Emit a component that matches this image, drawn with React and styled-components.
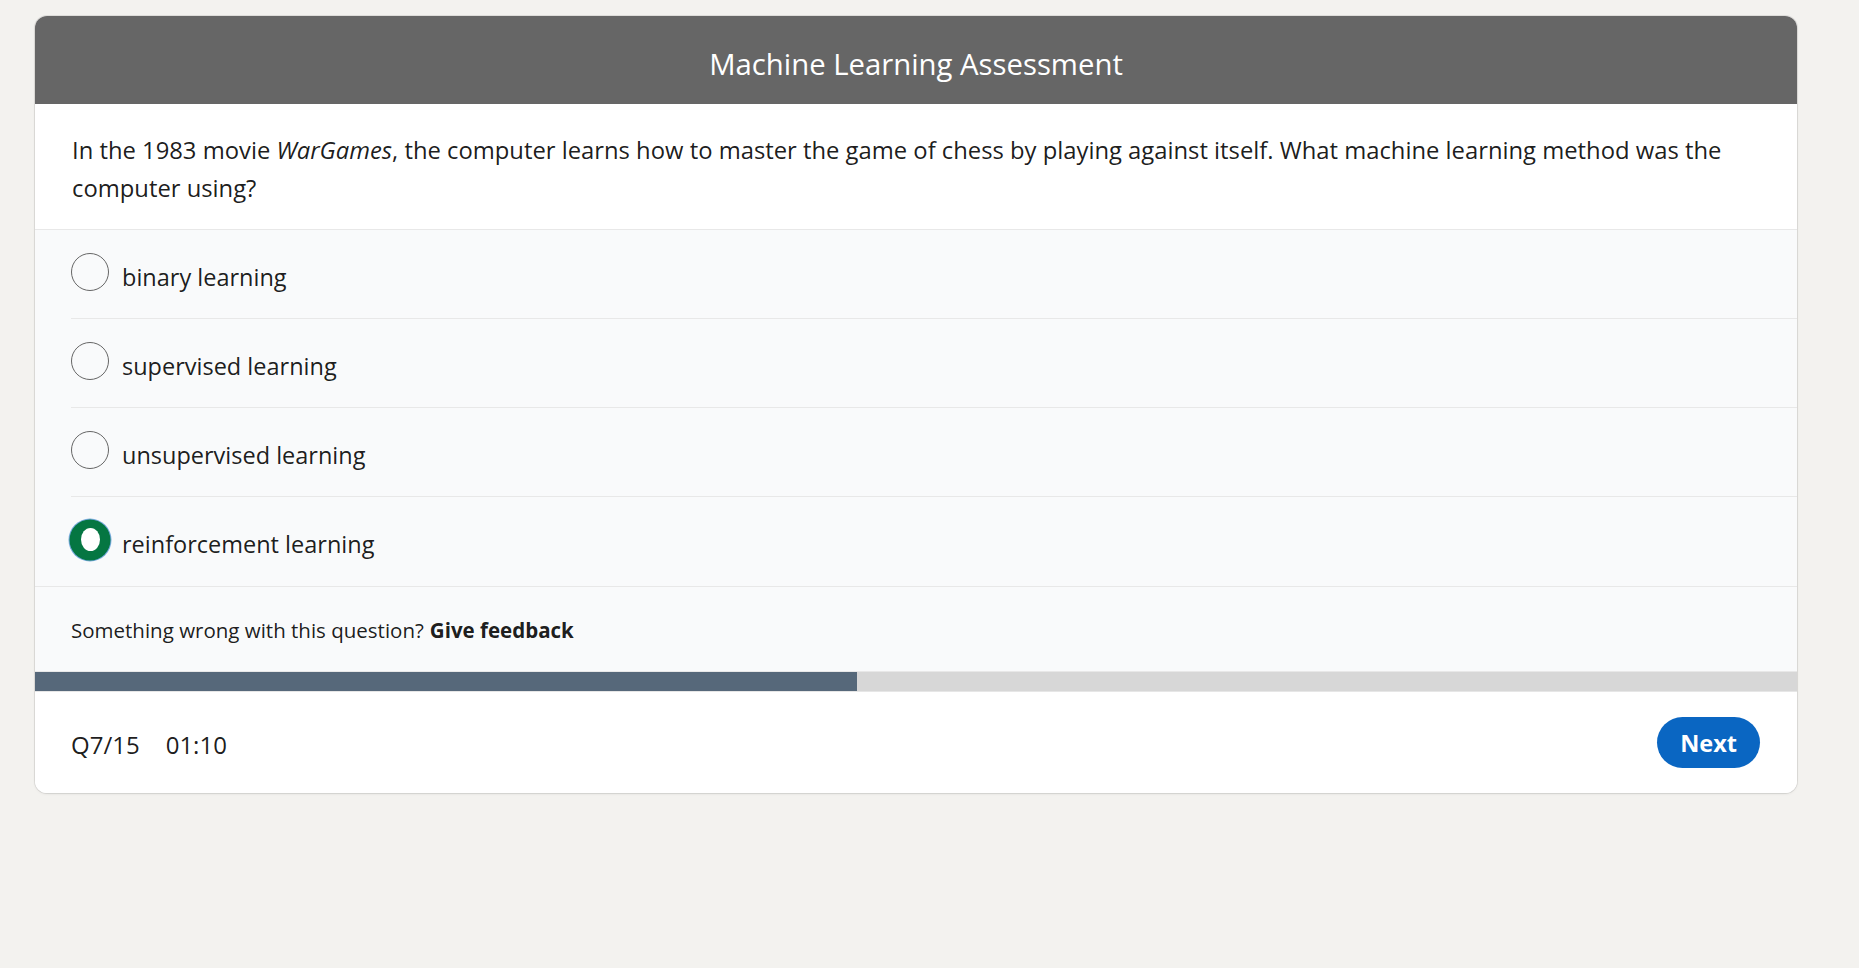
import React from "react";
import styled, { createGlobalStyle, css } from "styled-components";

const GlobalStyle = createGlobalStyle`
  html, body {
    margin: 0;
    padding: 0;
    background: #f3f2ef;
  }
  body {
    font-family: "Open Sans", "Noto Sans", "Liberation Sans", sans-serif;
    color: rgba(0, 0, 0, 0.9);
    -webkit-font-smoothing: antialiased;
  }
  * { box-sizing: border-box; }
`;

const Page = styled.div`
  min-height: 968px;
  padding: 16px 0 0 35px;
`;

const Card = styled.section`
  width: 1762px;
  background: #ffffff;
  border-radius: 12px;
  overflow: hidden;
  box-shadow: 0 0 0 1px rgba(0, 0, 0, 0.08), 0 1px 3px rgba(0, 0, 0, 0.08);
  display: flex;
  flex-direction: column;
`;

const Header = styled.header`
  height: 88px;
  padding-top: 8px;
  background: #666666;
  color: #ffffff;
  display: flex;
  align-items: center;
  justify-content: center;
  font-size: 29.3px;
  font-weight: 400;
`;

const Question = styled.div`
  padding: 27px 37px 22px;
  font-size: 23.8px;
  line-height: 38px;
  border-bottom: 1px solid #e8e8e8;
  background: #ffffff;

  em { font-style: italic; }
`;

const OptionList = styled.div`
  background: #f9fafb;
  border-bottom: 1px solid #e8e8e8;
  display: flex;
  flex-direction: column;
`;

const OptionRow = styled.label`
  margin-left: 36px;
  height: 89px;
  display: flex;
  align-items: center;
  gap: 13px;
  font-size: 23.5px;
  cursor: pointer;
  ${(p) => !p.$last && css`border-bottom: 1px solid #e8e8e8;`}
`;

const OptionText = styled.span`
  margin-top: 5px;
`;

const Radio = styled.span`
  flex: none;
  width: 38px;
  height: 38px;
  border-radius: 50%;
  margin-top: -4px;
  position: relative;
  ${(p) =>
    p.$checked
      ? css`
          background: #057642;
          box-shadow: 0 0 0 1.5px #057642, 0 0 0 2.5px rgba(10, 102, 194, 0.55);
          &::after {
            content: "";
            position: absolute;
            left: 9.5px;
            top: 7.5px;
            width: 19px;
            height: 23px;
            border-radius: 50%;
            background: #ffffff;
          }
        `
      : css`
          border: 1.5px solid #666666;
          background: transparent;
        `}
`;

const Feedback = styled.div`
  height: 85px;
  padding: 2px 0 0 36px;
  display: flex;
  align-items: center;
  background: #f9fafb;
  border-bottom: 1px solid #e8e8e8;
  font-size: 20.5px;

  strong { font-weight: 700; margin-left: 6px; }
`;

const Progress = styled.div`
  height: 20px;
  background: #d7d7d7;
  border-bottom: 1px solid #e6e6e6;
  display: flex;
`;

const ProgressFill = styled.div`
  height: 100%;
  background: #56687a;
`;

const Footer = styled.footer`
  height: 101px;
  padding: 0 37px 0 36px;
  display: flex;
  align-items: center;
  justify-content: space-between;
  background: #ffffff;
`;

const Meta = styled.div`
  display: flex;
  gap: 26px;
  font-size: 24px;
  margin-top: 3px;
`;

const NextButton = styled.button`
  height: 51px;
  padding: 0 23px;
  border: none;
  border-radius: 26px;
  background: #0a66c2;
  color: #ffffff;
  font-family: inherit;
  font-size: 23.5px;
  font-weight: 700;
  cursor: pointer;
`;

const options = [
  { label: "binary learning", checked: false },
  { label: "supervised learning", checked: false },
  { label: "unsupervised learning", checked: false },
  { label: "reinforcement learning", checked: true },
];

export default function App() {
  const current = 7;
  const total = 15;
  return (
    <>
      <GlobalStyle />
      <Page>
        <Card>
          <Header>Machine Learning Assessment</Header>
          <Question>
            In the 1983 movie <em>WarGames</em>, the computer learns how to master the game of chess by playing
            against itself. What machine learning method was the computer using?
          </Question>
          <OptionList>
            {options.map((o, i) => (
              <OptionRow key={o.label} $last={i === options.length - 1}>
                <Radio $checked={o.checked} />
                <OptionText>{o.label}</OptionText>
              </OptionRow>
            ))}
          </OptionList>
          <Feedback>
            Something wrong with this question?<strong>Give feedback</strong>
          </Feedback>
          <Progress>
            <ProgressFill style={{ width: `${(current / total) * 100}%` }} />
          </Progress>
          <Footer>
            <Meta>
              <span>Q{current}/{total}</span>
              <span>01:10</span>
            </Meta>
            <NextButton>Next</NextButton>
          </Footer>
        </Card>
      </Page>
    </>
  );
}
